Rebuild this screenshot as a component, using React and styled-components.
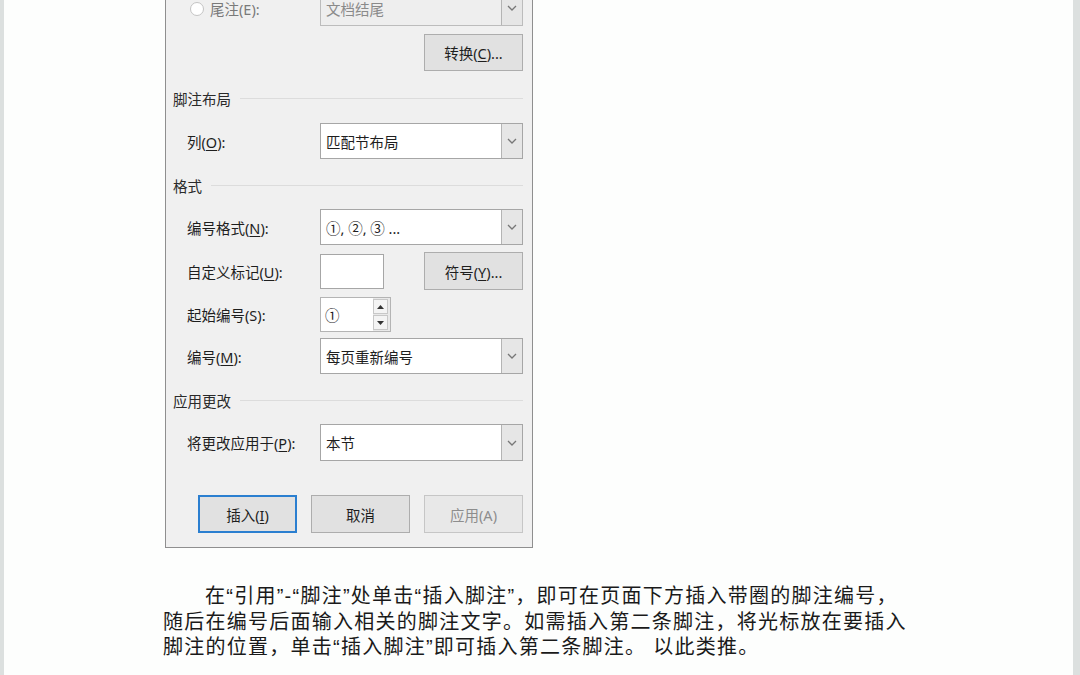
import React from 'react';
import styled, { createGlobalStyle } from 'styled-components';

const GlobalStyle = createGlobalStyle`
  html, body {
    margin: 0;
    background: #fdfefd;
    overflow: hidden;
  }
`;

const Screen = styled.div`
  display: flex;
  height: 675px;
  overflow: hidden;
`;

const Edge = styled.div`
  width: ${(p) => p.$w}px;
  flex: none;
  background: #dce0df;
`;

const Paper = styled.div`
  flex: 1;
  background: #fdfefd;
  padding-left: 161px;
`;

const Dialog = styled.div`
  width: 368px;
  box-sizing: border-box;
  margin-top: -10px;
  padding: 0 9px 14px 7px;
  background: #f0f0f0;
  border: 1px solid #8f8f8f;
  border-top: none;
  font-family: "Noto Sans", "Noto Sans CJK SC", sans-serif;
  font-size: 14.5px;
  color: #1e1e1e;
`;

const Row = styled.div`
  display: grid;
  grid-template-columns: 133px 1fr;
  align-items: center;
  padding-left: 14px;
  margin-top: ${(p) => p.$top || 0}px;
`;

const Label = styled.div`
  white-space: nowrap;
  color: ${(p) => (p.$disabled ? '#7a7a7a' : '#1e1e1e')};
`;

const Radio = styled.span`
  display: inline-block;
  vertical-align: -1px;
  width: 12px;
  height: 12px;
  margin: 0 6px 0 3px;
  border-radius: 50%;
  border: 1px solid #c4c4c4;
  background: #fff;
`;

const U = styled.span`
  text-decoration: underline;
  text-underline-offset: 2px;
`;

const Select = styled.div`
  display: flex;
  height: ${(p) => p.$h || 36}px;
  box-sizing: border-box;
  border: 1px solid ${(p) => (p.$disabled ? '#bcbcbc' : '#a6a6a6')};
  background: ${(p) => (p.$disabled ? '#eeeeee' : '#ffffff')};
  color: ${(p) => (p.$disabled ? '#8a8a8a' : '#1e1e1e')};
`;

const SelectText = styled.div`
  flex: 1;
  display: flex;
  align-items: center;
  padding-left: 5px;
  white-space: nowrap;
`;

const Arrow = styled.div`
  width: 20px;
  display: flex;
  align-items: center;
  justify-content: center;
  background: #e6e6e6;
  border-left: 1px solid #b4b4b4;
`;

const Chevron = () => (
  <svg width="10" height="6" viewBox="0 0 10 6">
    <path d="M1 1 L5 5 L9 1" fill="none" stroke="#777" strokeWidth="1.3" />
  </svg>
);

const Dropdown = ({ children, disabled, h }) => (
  <Select $disabled={disabled} $h={h}>
    <SelectText>{children}</SelectText>
    <Arrow>
      <Chevron />
    </Arrow>
  </Select>
);

const Controls = styled.div`
  display: flex;
  align-items: center;
  justify-content: ${(p) => p.$justify || 'space-between'};
`;

const Button = styled.div`
  width: 99px;
  height: ${(p) => p.$h || 37}px;
  box-sizing: border-box;
  display: flex;
  align-items: center;
  justify-content: center;
  background: ${(p) => (p.$disabled ? '#e8e8e8' : '#e1e1e1')};
  border: ${(p) => (p.$primary ? '2px solid #2b7fd0' : `1px solid ${p.$disabled ? '#c6c6c6' : '#adadad'}`)};
  color: ${(p) => (p.$disabled ? '#8d8d8d' : '#1e1e1e')};
  white-space: nowrap;
`;

const TextBox = styled.div`
  width: 64px;
  height: 35px;
  box-sizing: border-box;
  border: 1px solid #a6a6a6;
  background: #fff;
`;

const Spinner = styled.div`
  width: 71px;
  height: 35px;
  box-sizing: border-box;
  display: flex;
  border: 1px solid #b4b4b4;
  background: #e9e9e9;
`;

const SpinValue = styled.div`
  width: 48px;
  display: flex;
  align-items: center;
  padding-left: 4px;
  background: #fff;
`;

const SpinButtons = styled.div`
  flex: 1;
  display: flex;
  flex-direction: column;
  gap: 1px;
  padding: 1px 2px 1px 0;
`;

const SpinButton = styled.div`
  flex: 1;
  display: flex;
  align-items: center;
  justify-content: center;
  background: #f4f4f4;
  border: 1px solid #c8c8c8;
`;

const Triangle = ({ down }) => (
  <svg width="7" height="4" viewBox="0 0 7 4">
    <path d={down ? 'M0 0 L7 0 L3.5 4 Z' : 'M0 4 L7 4 L3.5 0 Z'} fill="#333" />
  </svg>
);

const Heading = styled.div`
  display: flex;
  align-items: center;
  gap: 9px;
  height: 20px;
  margin-top: ${(p) => p.$top}px;
  color: #2a2a2a;
  white-space: nowrap;

  &:after {
    content: '';
    flex: 1;
    height: 1px;
    background: #dcdcdc;
  }
`;

const ButtonBar = styled.div`
  display: flex;
  gap: 14px;
  margin-top: 34px;
  padding-left: 25px;
`;

const Paragraph = styled.div`
  margin: 36px 0 0 -2px;
  font-family: "Liberation Sans", "Noto Sans CJK SC", sans-serif;
  font-size: 20px;
  letter-spacing: 1.25px;
  line-height: 25.5px;
  color: #1a1a1a;
`;

const Line = styled.div`
  white-space: nowrap;
  padding-left: ${(p) => (p.$indent ? 42 : 0)}px;
`;

export default function App() {
  return (
    <Screen>
      <GlobalStyle />
      <Edge $w={4} />
      <Paper>
        <Dialog>
          <Row>
            <Label $disabled>
              <Radio />
              尾注(E):
            </Label>
            <Dropdown disabled>文档结尾</Dropdown>
          </Row>
          <Row $top={8}>
            <span />
            <Controls $justify="flex-end">
              <Button>
                <span>
                  转换(<U>C</U>)...
                </span>
              </Button>
            </Controls>
          </Row>

          <Heading $top={17}>脚注布局</Heading>
          <Row $top={15}>
            <Label>
              列(<U>O</U>):
            </Label>
            <Dropdown>匹配节布局</Dropdown>
          </Row>

          <Heading $top={16}>格式</Heading>
          <Row $top={14}>
            <Label>
              编号格式(<U>N</U>):
            </Label>
            <Dropdown>①, ②, ③ ...</Dropdown>
          </Row>
          <Row $top={7}>
            <Label>
              自定义标记(<U>U</U>):
            </Label>
            <Controls>
              <TextBox />
              <Button $h={38}>
                <span>
                  符号(<U>Y</U>)...
                </span>
              </Button>
            </Controls>
          </Row>
          <Row $top={7}>
            <Label>起始编号(S):</Label>
            <Controls $justify="flex-start">
              <Spinner>
                <SpinValue>①</SpinValue>
                <SpinButtons>
                  <SpinButton>
                    <Triangle />
                  </SpinButton>
                  <SpinButton>
                    <Triangle down />
                  </SpinButton>
                </SpinButtons>
              </Spinner>
            </Controls>
          </Row>
          <Row $top={6}>
            <Label>
              编号(<U>M</U>):
            </Label>
            <Dropdown>每页重新编号</Dropdown>
          </Row>

          <Heading $top={16}>应用更改</Heading>
          <Row $top={14}>
            <Label>
              将更改应用于(<U>P</U>):
            </Label>
            <Dropdown h={37}>本节</Dropdown>
          </Row>

          <ButtonBar>
            <Button $primary $h={38}>
              <span>
                插入(<U>I</U>)
              </span>
            </Button>
            <Button $h={38}>取消</Button>
            <Button $disabled $h={38}>
              应用(A)
            </Button>
          </ButtonBar>
        </Dialog>

        <Paragraph>
          <Line $indent>在“引用”-“脚注”处单击“插入脚注”，即可在页面下方插入带圈的脚注编号，</Line>
          <Line>随后在编号后面输入相关的脚注文字。如需插入第二条脚注，将光标放在要插入</Line>
          <Line>脚注的位置，单击“插入脚注”即可插入第二条脚注。 以此类推。</Line>
        </Paragraph>
      </Paper>
      <Edge $w={7} />
    </Screen>
  );
}
